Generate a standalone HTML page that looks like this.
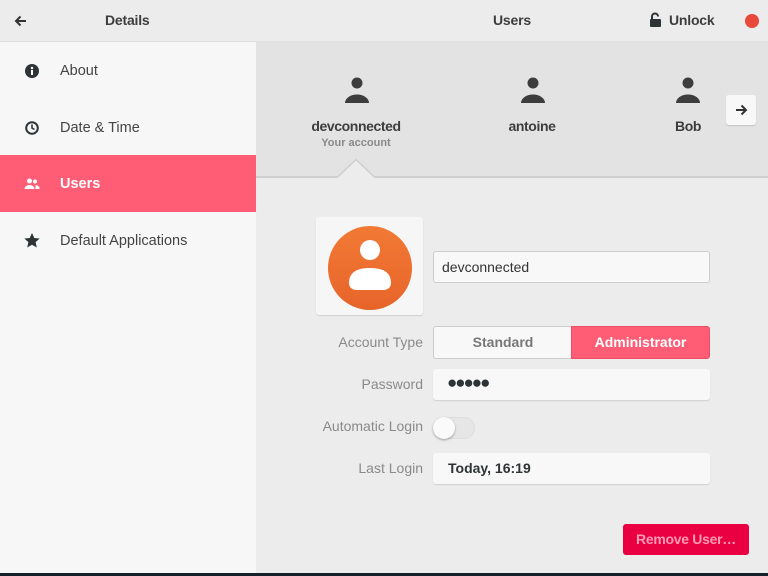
<!DOCTYPE html>
<html><head><meta charset="utf-8"><style>
*{box-sizing:border-box;margin:0;padding:0}
body{width:768px;height:576px;overflow:hidden;background:#ececec;font-family:"Liberation Sans",sans-serif;color:#2e3436;position:relative}
.a{position:absolute}
.hdr{left:0;top:0;width:768px;height:42px;background:#ececec;border-bottom:1px solid #e0e0e0}
.t{font-size:14px;font-weight:bold;color:#3d3d3d;letter-spacing:-0.2px}
.side{left:0;top:42px;width:256px;height:532px;background:#f7f7f7}
.item{left:0;width:256px;height:57px;font-size:14.5px;color:#444;display:flex;align-items:center}
.item span.ic{width:60px;padding-left:4px;display:flex;justify-content:center}
.strip{left:256px;top:42px;width:512px;height:136px;background:#e3e3e3;border-bottom:2px solid #cfcfcf}
.uname{font-size:14px;font-weight:bold;color:#3d3d3d;text-align:center;letter-spacing:-0.4px}
.lbl{font-size:14px;color:#8a8a8a;text-align:right;width:200px;left:223px}
.field{background:#f8f8f8;border-radius:3px;box-shadow:0 1px 1px rgba(0,0,0,.12)}
</style></head><body>
<div class="a hdr"></div>
<svg class="a" style="left:14px;top:14px" width="14" height="14" viewBox="0 0 14 14"><path d="M12 7H2M6.5 2.5L2 7l4.5 4.5" stroke="#333" stroke-width="2" fill="none"/></svg>
<div class="a t" style="left:105px;top:12px">Details</div>
<div class="a t" style="left:493px;top:12px">Users</div>
<svg class="a" style="left:649px;top:12px" width="13" height="16" viewBox="0 0 13 16"><path d="M3 7V4.5a3 3 0 0 1 6 0" stroke="#2e3436" stroke-width="2" fill="none"/><rect x="1" y="7" width="11" height="8" rx="1" fill="#2e3436"/></svg>
<div class="a t" style="left:669px;top:12px">Unlock</div>
<div class="a" style="left:745px;top:14px;width:14px;height:14px;border-radius:50%;background:#e8493a"></div>

<div class="a side"></div>
<div class="a item" style="top:42px"><span class="ic"><svg width="14" height="14"><circle cx="7" cy="7" r="7" fill="#2e3436"/><rect x="6" y="6" width="2" height="5" fill="#fff"/><circle cx="7" cy="4" r="1.2" fill="#fff"/></svg></span>About</div>
<div class="a item" style="top:99px"><span class="ic"><svg width="14" height="14"><circle cx="7" cy="7" r="5.8" stroke="#2e3436" stroke-width="2" fill="none"/><path d="M7 3.5V7l2.5 1.5" stroke="#2e3436" stroke-width="1.6" fill="none"/></svg></span>Date &amp; Time</div>
<div class="a item" style="top:155px;height:57px;background:#ff5c76;color:#fff;font-weight:bold"><span class="ic"><svg width="16" height="14"><circle cx="5.5" cy="4" r="2.5" fill="#fff"/><path d="M0.5 12a5 4 0 0 1 10 0z" fill="#fff"/><circle cx="11" cy="4.5" r="2" fill="#fff"/><path d="M11.5 8a4 3.5 0 0 1 4 4h-4z" fill="#fff"/></svg></span>Users</div>
<div class="a item" style="top:212px"><span class="ic"><svg width="16" height="15" viewBox="0 0 16 15"><path d="M8 0l2.3 5 5.4.5-4.1 3.6 1.2 5.4L8 11.7 3.2 14.5l1.2-5.4L.3 5.5 5.7 5z" fill="#2e3436"/></svg></span>Default Applications</div>

<div class="a strip"></div>
<svg class="a" style="left:336px;top:158px" width="40" height="22"><path d="M0 20.5L20 1.5 40 20.5" fill="#ececec" stroke="#cfcfcf" stroke-width="1.5"/><rect x="0" y="20" width="40" height="2" fill="#ececec"/></svg>
<svg class="a" style="left:344px;top:77px" width="26" height="27"><circle cx="13" cy="6" r="5.5" fill="#3d3d3d"/><path d="M1 26a12 8.5 0 0 1 24 0z" fill="#3d3d3d"/></svg>
<svg class="a" style="left:520px;top:77px" width="26" height="27"><circle cx="13" cy="6" r="5.5" fill="#3d3d3d"/><path d="M1 26a12 8.5 0 0 1 24 0z" fill="#3d3d3d"/></svg>
<svg class="a" style="left:675px;top:77px" width="26" height="27"><circle cx="13" cy="6" r="5.5" fill="#3d3d3d"/><path d="M1 26a12 8.5 0 0 1 24 0z" fill="#3d3d3d"/></svg>
<div class="a uname" style="left:296px;width:120px;top:118px">devconnected</div>
<div class="a" style="left:296px;width:120px;top:137px;font-size:11px;color:#8a8a8a;text-align:center;font-weight:bold">Your account</div>
<div class="a uname" style="left:472px;width:120px;top:118px">antoine</div>
<div class="a uname" style="left:628px;width:120px;top:118px">Bob</div>
<div class="a" style="left:726px;top:95px;width:30px;height:30px;background:#f8f8f8;border-radius:3px;box-shadow:0 1px 1px rgba(0,0,0,.15)"></div>
<svg class="a" style="left:734px;top:103px" width="14" height="14"><path d="M2 7h10M7.5 2.5L12 7l-4.5 4.5" stroke="#333" stroke-width="2" fill="none"/></svg>

<div class="a field" style="left:316px;top:217px;width:107px;height:98px;background:#f6f6f6"></div>
<svg class="a" style="left:327px;top:225px" width="86" height="86"><defs><linearGradient id="g" x1="0" y1="0" x2="0" y2="1"><stop offset="0" stop-color="#f27a35"/><stop offset="1" stop-color="#e7642a"/></linearGradient></defs><circle cx="43" cy="43" r="42" fill="url(#g)"/><circle cx="43" cy="25" r="10" fill="#fff"/><path d="M22 58c0-12 10-15 21-15s21 3 21 15c0 5-4 7-8 7H30c-4 0-8-2-8-7z" fill="#fff"/></svg>

<div class="a" style="left:433px;top:251px;width:277px;height:32px;background:#f8f8f8;border:1px solid #cdcdcd;border-radius:3px;font-size:14px;padding:7px 8px;color:#333">devconnected</div>

<div class="a lbl" style="top:334px">Account Type</div>
<div class="a" style="left:433px;top:326px;width:139px;height:33px;background:#f8f8f8;border:1px solid #cdcdcd;border-right:none;border-radius:3px 0 0 3px;font-size:14px;font-weight:bold;color:#777;text-align:center;line-height:31px">Standard</div>
<div class="a" style="left:571px;top:326px;width:139px;height:33px;background:#ff5c76;border:1px solid #ee4d66;border-radius:0 3px 3px 0;font-size:14px;font-weight:bold;color:#fff;text-align:center;line-height:31px">Administrator</div>

<div class="a lbl" style="top:376px">Password</div>
<div class="a field" style="left:433px;top:369px;width:277px;height:31px;font-size:17px;padding:4px 14px;color:#2e3436;letter-spacing:-2px">●●●●●</div>

<div class="a lbl" style="top:418px">Automatic Login</div>
<div class="a" style="left:433px;top:417px;width:42px;height:22px;border-radius:11px;background:#e6e6e6;box-shadow:inset 0 0 0 1px #ddd"></div>
<div class="a" style="left:433px;top:417px;width:22px;height:22px;border-radius:50%;background:#fafafa;box-shadow:0 1px 2px rgba(0,0,0,.35)"></div>

<div class="a lbl" style="top:460px">Last Login</div>
<div class="a field" style="left:433px;top:453px;width:277px;height:31px;font-size:14px;font-weight:bold;padding:7px 15px;color:#2e3436">Today, 16:19</div>

<div class="a" style="left:623px;top:524px;width:126px;height:31px;background:#ea0042;border-radius:3px;color:#ff9bb3;font-size:14px;font-weight:bold;text-align:center;line-height:31px;letter-spacing:-0.3px">Remove User…</div>
<div class="a" style="left:0;top:573px;width:768px;height:3px;background:#14202c"></div>
</body></html>
